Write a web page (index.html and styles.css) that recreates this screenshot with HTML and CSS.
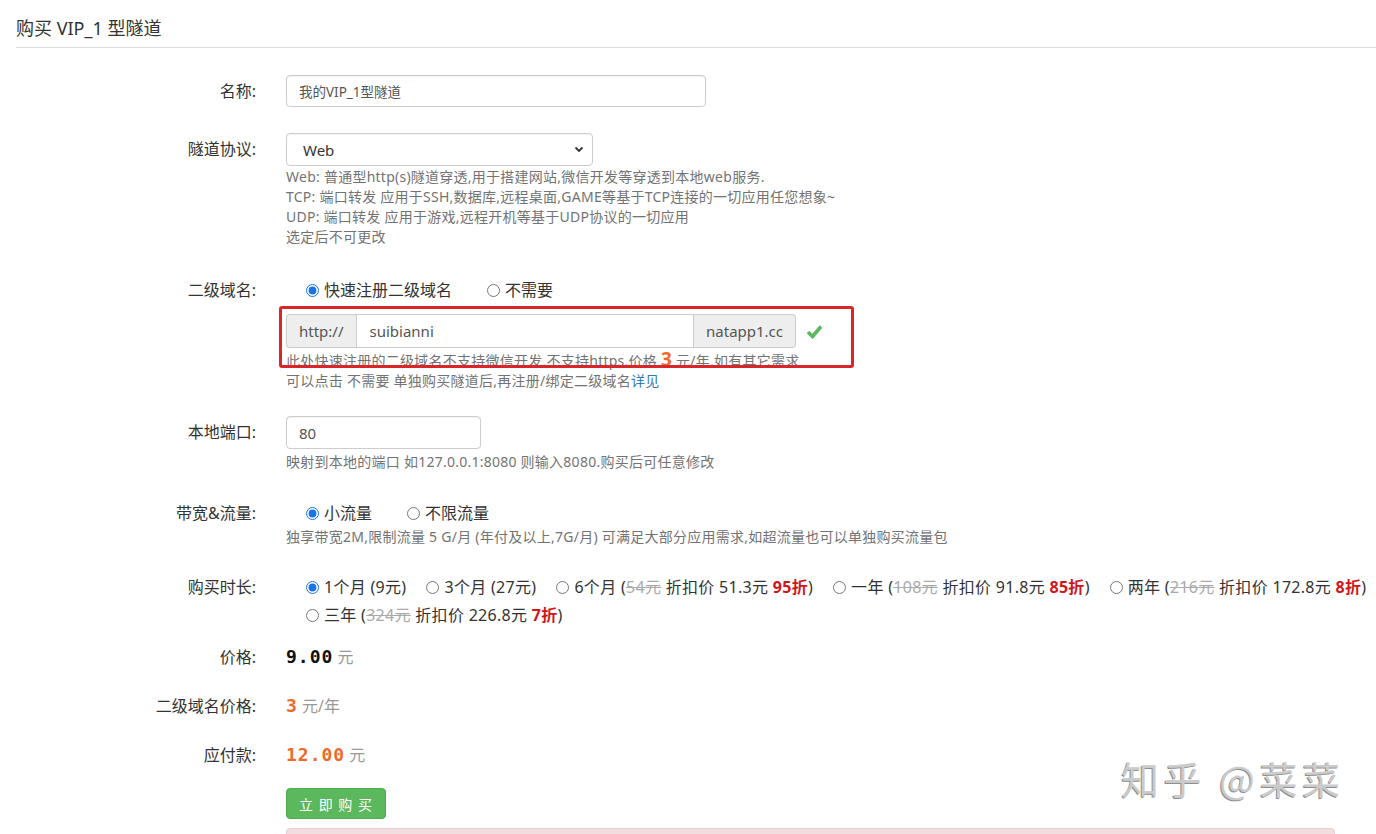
FILE: index.html
```html
<!DOCTYPE html>
<html lang="zh-CN">
<head>
    <meta charset="UTF-8">
    <meta name="viewport" content="width=device-width, initial-scale=1.0">
    <title>购买 VIP_1 型隧道</title>
    <link rel="stylesheet" href="styles.css">
</head>
<body>
    <div class="page">
        <h3 class="page-title">购买 VIP_1 型隧道</h3>

        <form class="buy-form">
            <div class="form-row row-name">
                <label class="form-label">名称:</label>
                <div class="form-field">
                    <input class="text-input name-input" type="text" value="我的VIP_1型隧道">
                </div>
            </div>

            <div class="form-row row-proto">
                <label class="form-label">隧道协议:</label>
                <div class="form-field">
                    <div class="select-wrap">
                        <select class="text-input proto-select">
                            <option>Web</option>
                            <option>TCP</option>
                            <option>UDP</option>
                        </select>
                        <svg class="select-arrow" width="10" height="7" viewBox="0 0 10 7">
                            <polyline points="1.5,1.5 5,5 8.5,1.5" fill="none" stroke="#333" stroke-width="1.8"/>
                        </svg>
                    </div>
                    <p class="help">
                        Web: 普通型http(s)隧道穿透,用于搭建网站,微信开发等穿透到本地web服务.<br>
                        TCP: 端口转发 应用于SSH,数据库,远程桌面,GAME等基于TCP连接的一切应用任您想象~<br>
                        UDP: 端口转发 应用于游戏,远程开机等基于UDP协议的一切应用<br>
                        选定后不可更改
                    </p>
                </div>
            </div>

            <div class="form-row row-domain radio-row">
                <label class="form-label">二级域名:</label>
                <div class="form-field">
                    <div class="radio-group">
                        <label class="radio-item"><input type="radio" name="domain" checked>快速注册二级域名</label>
                        <label class="radio-item"><input type="radio" name="domain">不需要</label>
                    </div>
                    <div class="domain-field">
                        <div class="domain-line">
                            <div class="input-group">
                                <span class="addon addon-left">http://</span>
                                <input class="group-input" type="text" value="suibianni">
                                <span class="addon addon-right">natapp1.cc</span>
                            </div>
                            <svg class="check-icon" width="17" height="15" viewBox="0 0 17 15">
                                <polyline points="2,8 6.5,12.5 15,2.5" fill="none" stroke="#5cb85c" stroke-width="3.6"/>
                            </svg>
                        </div>
                        <p class="help domain-help">
                            此处快速注册的二级域名不支持微信开发,不支持https,价格 <b class="orange">3</b> 元/年,如有其它需求<br>
                            可以点击 不需要 单独购买隧道后,再注册/绑定二级域名<a href="#" class="link">详见</a>
                        </p>
                        <div class="mark-box"></div>
                    </div>
                </div>
            </div>

            <div class="form-row row-port">
                <label class="form-label">本地端口:</label>
                <div class="form-field">
                    <input class="text-input port-input" type="text" value="80">
                    <p class="help">映射到本地的端口 如127.0.0.1:8080 则输入8080.购买后可任意修改</p>
                </div>
            </div>

            <div class="form-row row-flow radio-row">
                <label class="form-label">带宽&amp;流量:</label>
                <div class="form-field">
                    <div class="radio-group">
                        <label class="radio-item"><input type="radio" name="flow" checked>小流量</label>
                        <label class="radio-item"><input type="radio" name="flow">不限流量</label>
                    </div>
                    <p class="help flow-help">独享带宽2M,限制流量 5 G/月 (年付及以上,7G/月) 可满足大部分应用需求,如超流量也可以单独购买流量包</p>
                </div>
            </div>

            <div class="form-row row-period radio-row">
                <label class="form-label">购买时长:</label>
                <div class="form-field">
                    <div class="radio-group dense">
                        <label class="radio-item"><input type="radio" name="period" checked>1个月 (9元)</label>
                        <label class="radio-item"><input type="radio" name="period">3个月 (27元)</label>
                        <label class="radio-item"><input type="radio" name="period">6个月 (<s>54元</s>&nbsp;折扣价 51.3元&nbsp;<b class="off">95折</b>)</label>
                        <label class="radio-item"><input type="radio" name="period">一年 (<s>108元</s>&nbsp;折扣价 91.8元&nbsp;<b class="off">85折</b>)</label>
                        <label class="radio-item"><input type="radio" name="period">两年 (<s>216元</s>&nbsp;折扣价 172.8元&nbsp;<b class="off">8折</b>)</label>
                        <label class="radio-item"><input type="radio" name="period">三年 (<s>324元</s>&nbsp;折扣价 226.8元&nbsp;<b class="off">7折</b>)</label>
                    </div>
                </div>
            </div>

            <div class="form-row price-row row-price">
                <label class="form-label">价格:</label>
                <div class="form-field">
                    <span class="amount">9.00</span> <span class="unit">元</span>
                </div>
            </div>

            <div class="form-row price-row">
                <label class="form-label">二级域名价格:</label>
                <div class="form-field">
                    <span class="amount orange">3</span> <span class="unit">元/年</span>
                </div>
            </div>

            <div class="form-row price-row row-total">
                <label class="form-label">应付款:</label>
                <div class="form-field">
                    <span class="amount orange">12.00</span> <span class="unit">元</span>
                </div>
            </div>

            <div class="form-row row-submit">
                <span></span>
                <div class="form-field">
                    <button type="button" class="btn-buy">立 即 购 买</button>
                    <div class="alert"></div>
                </div>
            </div>
        </form>

        <div class="watermark">知乎 @菜菜</div>
    </div>
</body>
</html>
```

FILE: styles.css
```css
body {
    margin: 0;
    background: #fff;
    color: #333;
    font-family: "Noto Sans", "Noto Sans CJK SC", sans-serif;
    overflow: hidden;
}

.page {
    position: relative;
    padding-left: 16px;
    height: 834px;
}

.page-title {
    margin: 0;
    padding: 16px 0 7px;
    font-size: 18px;
    font-weight: normal;
    line-height: 24px;
    border-bottom: 1px solid #ddd;
}

.buy-form {
    padding-top: 27px;
}

/* label column + field column */
.form-row {
    display: grid;
    grid-template-columns: 240px 1fr;
    column-gap: 30px;
    margin-bottom: 26px;
}

.form-label {
    text-align: right;
    font-size: 16px;
    line-height: 32px;
    color: #333;
}

.radio-row .form-label,
.price-row .form-label {
    line-height: 28px;
}

.row-proto { margin-bottom: 29px; }
.row-domain { margin-bottom: 25px; }
.row-port { margin-bottom: 27px; }
.row-period { margin-bottom: 14px; }
.price-row { margin-bottom: 21px; }
.row-total { margin-bottom: 19px; }

.help {
    margin: 3px 0 0;
    font-size: 14px;
    letter-spacing: 0.25px;
    line-height: 20px;
    color: #737373;
}

.row-proto .help {
    margin-top: 1px;
}

.flow-help {
    margin-top: 0;
}

/* inputs */
.text-input {
    box-sizing: border-box;
    display: block;
    border: 1px solid #ccc;
    border-radius: 4px;
    background: #fff;
    color: #555;
    font-family: inherit;
    outline: none;
    box-shadow: inset 0 1px 1px rgba(0, 0, 0, 0.05);
}

.name-input {
    width: 420px;
    height: 32px;
    padding: 0 12px;
    font-size: 13.5px;
}

.port-input {
    width: 195px;
    height: 33px;
    padding: 0 12px;
    font-size: 15px;
}

.select-wrap {
    position: relative;
    width: 307px;
}

.proto-select {
    width: 307px;
    height: 33px;
    padding: 0 16px;
    font-size: 15px;
    color: #333;
    appearance: none;
    -webkit-appearance: none;
}

.select-arrow {
    position: absolute;
    right: 9px;
    top: 13px;
}

/* radios */
.radio-group {
    display: flex;
    flex-wrap: wrap;
    column-gap: 15px;
    font-size: 16px;
    line-height: 28px;
}

.radio-group.dense {
    column-gap: 0;
    letter-spacing: 0.3px;
}

.radio-item {
    display: inline-flex;
    align-items: center;
    white-space: nowrap;
    color: #333;
}

.radio-item input {
    width: 13px;
    height: 13px;
    margin: 0 5px 0 20px;
    accent-color: #1a73e8;
}

.radio-item s {
    color: #aaa;
}

.off {
    color: #d0161b;
    font-weight: bold;
}

/* sub-domain field */
.domain-field {
    position: relative;
    margin-top: 10px;
}

.domain-line {
    display: flex;
    align-items: center;
}

.input-group {
    display: flex;
    width: 510px;
    height: 34px;
}

.addon {
    box-sizing: border-box;
    padding: 0 12px;
    background: #eee;
    border: 1px solid #ccc;
    color: #555;
    font-size: 15px;
    line-height: 32px;
}

.addon-left {
    border-right: 0;
    border-radius: 4px 0 0 4px;
}

.addon-right {
    border-left: 0;
    border-radius: 0 4px 4px 0;
}

.group-input {
    flex: 1;
    min-width: 0;
    box-sizing: border-box;
    border: 1px solid #ccc;
    padding: 0 13px;
    font-family: inherit;
    font-size: 15px;
    color: #555;
    outline: none;
}

.check-icon {
    margin-left: 10px;
}

.domain-help .orange {
    font-size: 19px;
    line-height: 14px;
}

.link {
    color: #337ab7;
    text-decoration: none;
}

.mark-box {
    position: absolute;
    left: -7px;
    top: -8px;
    width: 575px;
    height: 62px;
    box-sizing: border-box;
    border: 3px solid #d9262b;
    border-radius: 3px;
}

/* totals */
.price-row .form-field {
    line-height: 28px;
}

.amount {
    font-family: "DejaVu Sans Mono", monospace;
    font-size: 18px;
    font-weight: bold;
    letter-spacing: 1px;
    color: #111;
}

.unit {
    font-size: 16px;
    color: #999;
}

.orange {
    color: #ee6a2c;
    font-weight: bold;
}

.btn-buy {
    display: block;
    height: 31px;
    padding: 0 12px;
    border: 1px solid #4cae4c;
    border-radius: 4px;
    background: #5cb85c;
    color: #fff;
    font-family: inherit;
    font-size: 14px;
    letter-spacing: 1px;
}

.alert {
    margin: 9px 41px 0 0;
    height: 60px;
    border: 1px solid #ebccd1;
    border-radius: 4px;
    background: #f2dede;
}

.watermark {
    position: absolute;
    left: 1121px;
    top: 750px;
    font-family: "Noto Sans CJK SC", sans-serif;
    font-size: 38px;
    letter-spacing: 4.5px;
    color: #cbcbcb;
    text-shadow: -1px 1px 0 #8e8e8e;
}
```
